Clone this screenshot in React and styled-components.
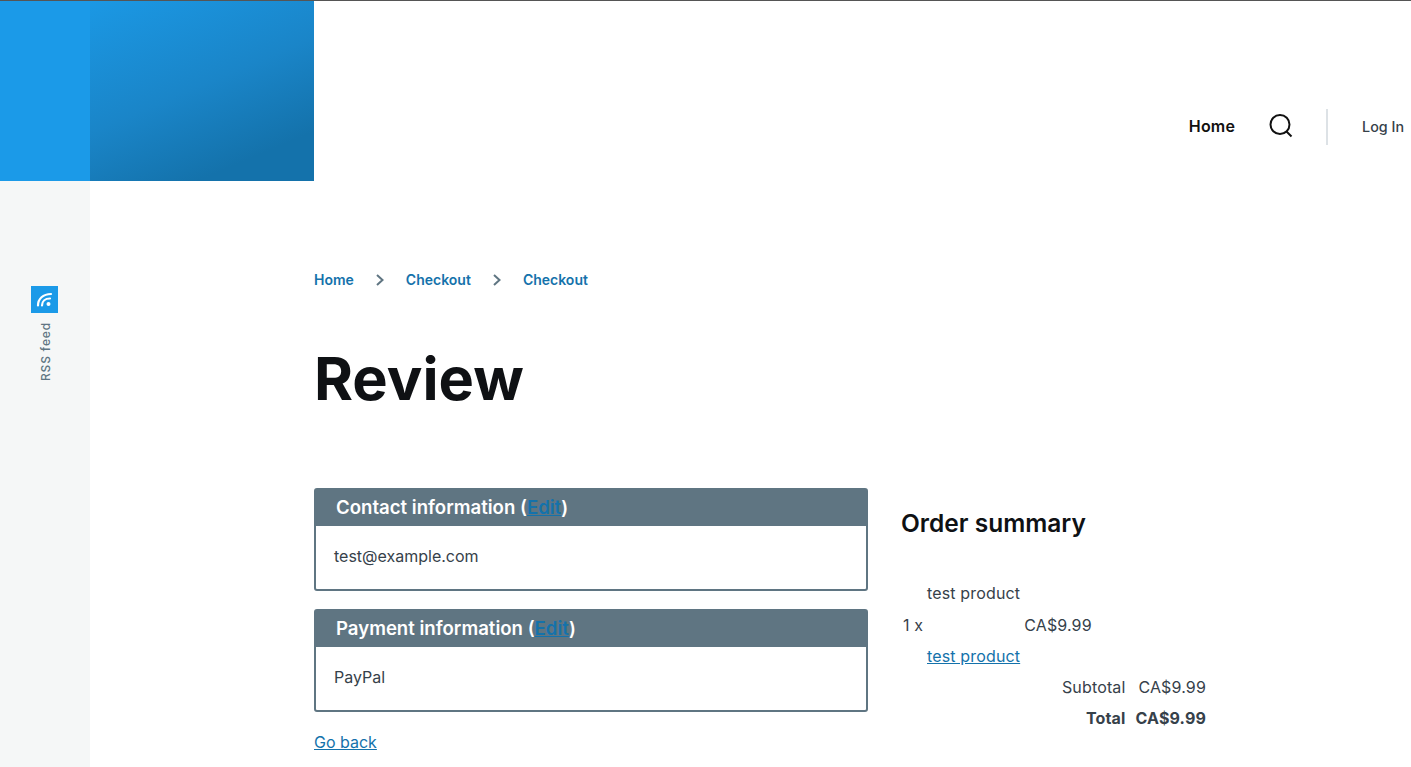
import React from 'react'
import styled, { createGlobalStyle } from 'styled-components'

const GlobalStyle = createGlobalStyle`
  html, body {
    margin: 0;
    padding: 0;
    height: 100%;
    overflow: hidden;
    background: #fff;
    font-family: Inter, 'Liberation Sans', sans-serif;
    color: #36414a;
  }
  * {
    box-sizing: border-box;
  }
`

const Page = styled.div`
  height: 767px;
  display: flex;
  flex-direction: column;
  border-top: 1px solid #555;
`
const Header = styled.header`
  height: 180px;
  display: flex;
  flex-shrink: 0;
`
const BrandSide = styled.div`
  width: 90px;
  background: #1b9ae8;
`
const BrandLogo = styled.div`
  width: 224px;
  background: linear-gradient(157deg, #1b98e4 0%, #1a85c8 48%, #1472ab 82%);
`
const Nav = styled.nav`
  margin-left: auto;
  display: flex;
  align-items: center;
  height: 36px;
  margin-top: 107px;
`
const NavLink = styled.a`
  font-size: 16px;
  font-weight: 600;
  color: #111;
  letter-spacing: 0.2px;
  margin-right: 33px;
`
const SearchButton = styled.span`
  display: flex;
  width: 26px;
  height: 26px;
  margin-right: 32px;
`
const NavDivider = styled.span`
  width: 2px;
  height: 36px;
  background: #dde2e6;
  margin: 2px 34px 0 0;
`
const LoginLink = styled.a`
  font-size: 14.3px;
  font-weight: 500;
  color: #36414a;
  margin-right: 7px;
`
const Body = styled.div`
  flex: 1;
  display: flex;
  min-height: 0;
`
const Sidebar = styled.aside`
  width: 90px;
  flex-shrink: 0;
  background: #f5f7f7;
  display: flex;
  flex-direction: column;
  align-items: center;
  padding: 105px 1px 0 0;
`
const RssIcon = styled.span`
  width: 27px;
  height: 27px;
  background: #1b9ae8;
  display: flex;
  align-items: center;
  justify-content: center;
`
const RssLabel = styled.span`
  writing-mode: vertical-rl;
  transform: rotate(180deg);
  font-size: 12px;
  font-weight: 500;
  letter-spacing: 0.85px;
  color: #5f7582;
  margin: 9px 0 0 2px;
`
const Main = styled.main`
  flex: 1;
  padding: 89px 0 0 224px;
`
const Breadcrumbs = styled.div`
  display: flex;
  align-items: center;
  height: 18px;
`
const Crumb = styled.a`
  font-size: 14px;
  font-weight: 600;
  color: #1472ab;
`
const CrumbArrow = styled.span`
  display: flex;
  margin: 2px 21px 0 21px;
`
const Title = styled.h1`
  margin: 55px 0 0;
  font-size: 59.5px;
  line-height: 70px;
  font-weight: 700;
  color: #0f1114;
`
const Columns = styled.div`
  display: flex;
  margin-top: 75px;
`
const LeftColumn = styled.div`
  width: 554px;
  display: flex;
  flex-direction: column;
`
const Panel = styled.section`
  height: 103px;
  border: 2px solid #5f7582;
  border-radius: 3px;
  margin-bottom: 18px;
`
const PanelTitle = styled.h2`
  margin: 0;
  height: 36px;
  background: #5f7582;
  padding-left: 20px;
  font-size: 18.6px;
  line-height: 35px;
  font-weight: 600;
  color: #fff;
`
const PanelEdit = styled.a`
  color: #1472ab;
  text-decoration: underline;
`
const PanelBody = styled.div`
  padding: 19px 18px 0;
  font-size: 16px;
  line-height: 22px;
  color: #36414a;
`
const BackLink = styled.a`
  font-size: 16px;
  line-height: 22px;
  color: #1472ab;
  text-decoration: underline;
  margin-top: 1px;
`
const Summary = styled.div`
  margin-left: 33px;
  width: 310px;
`
const SummaryTitle = styled.h3`
  margin: 20px 0 0;
  font-size: 24.5px;
  line-height: 30px;
  font-weight: 600;
  color: #0f1114;
`
const ItemGrid = styled.div`
  display: grid;
  grid-template-columns: 24px auto 1fr;
  margin-top: 40px;
  font-size: 16px;
  letter-spacing: 0.15px;
  line-height: 31.5px;
  padding-left: 2px;
`
const ItemLink = styled.a`
  color: #1472ab;
  text-decoration: underline;
`
const ItemPrice = styled.span`
  text-align: left;
  padding-left: 4px;
`
const Totals = styled.div`
  display: grid;
  grid-template-columns: auto auto;
  justify-content: end;
  column-gap: 10px;
  width: 305px;
  margin-top: -1px;
  font-size: 16px;
  letter-spacing: 0.15px;
  line-height: 31.5px;
`
const TotalCell = styled.span`
  text-align: right;
  font-weight: ${p => (p.$strong ? 700 : 400)};
`

const Chevron = () => (
  <CrumbArrow>
    <svg width="10" height="12" viewBox="0 0 10 12" fill="none">
      <path d="M2 1l5.5 5-5.5 5" stroke="#5f7582" strokeWidth="2" />
    </svg>
  </CrumbArrow>
)

const App = () => {
  return (
    <Page>
      <GlobalStyle />
      <Header>
        <BrandSide />
        <BrandLogo />
        <Nav>
          <NavLink>Home</NavLink>
          <SearchButton>
            <svg width="26" height="26" viewBox="0 0 26 26" fill="none">
              <circle cx="12" cy="11.5" r="9.5" stroke="#111" strokeWidth="2" />
              <path d="M18.5 18.5l5 5" stroke="#111" strokeWidth="2" />
            </svg>
          </SearchButton>
          <NavDivider />
          <LoginLink>Log In</LoginLink>
        </Nav>
      </Header>
      <Body>
        <Sidebar>
          <RssIcon>
            <svg width="17" height="15" viewBox="0 0 17 15" fill="none">
              <path d="M2 13.5C2 7 7 2 15 2" stroke="#fff" strokeWidth="2.2" strokeLinecap="round" />
              <path d="M6 13.5C6 9.5 9 6.5 14 6.5" stroke="#fff" strokeWidth="2.2" strokeLinecap="round" />
              <circle cx="12.5" cy="12" r="2" fill="#fff" />
            </svg>
          </RssIcon>
          <RssLabel>RSS feed</RssLabel>
        </Sidebar>
        <Main>
          <Breadcrumbs>
            <Crumb>Home</Crumb>
            <Chevron />
            <Crumb>Checkout</Crumb>
            <Chevron />
            <Crumb>Checkout</Crumb>
          </Breadcrumbs>
          <Title>Review</Title>
          <Columns>
            <LeftColumn>
              <Panel>
                <PanelTitle>Contact information (<PanelEdit>Edit</PanelEdit>)</PanelTitle>
                <PanelBody>test@example.com</PanelBody>
              </Panel>
              <Panel>
                <PanelTitle>Payment information (<PanelEdit>Edit</PanelEdit>)</PanelTitle>
                <PanelBody>PayPal</PanelBody>
              </Panel>
              <BackLink>Go back</BackLink>
            </LeftColumn>
            <Summary>
              <SummaryTitle>Order summary</SummaryTitle>
              <ItemGrid>
                <span />
                <span>test product</span>
                <span />
                <span>1 x</span>
                <span />
                <ItemPrice>CA$9.99</ItemPrice>
                <span />
                <ItemLink>test product</ItemLink>
                <span />
              </ItemGrid>
              <Totals>
                <TotalCell>Subtotal</TotalCell>
                <TotalCell>CA$9.99</TotalCell>
                <TotalCell $strong>Total</TotalCell>
                <TotalCell $strong>CA$9.99</TotalCell>
              </Totals>
            </Summary>
          </Columns>
        </Main>
      </Body>
    </Page>
  )
}

export default App
